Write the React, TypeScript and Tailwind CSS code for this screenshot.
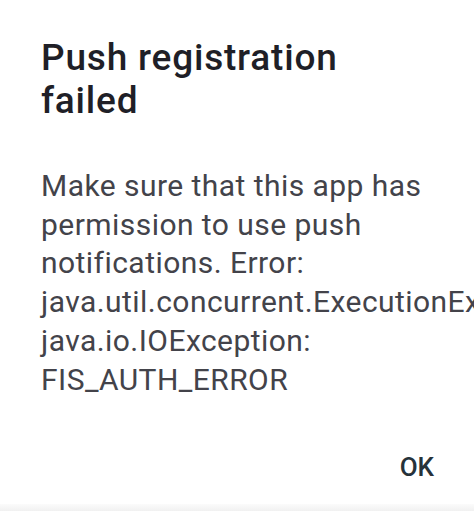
export default function App() {
  return (
    <div className="w-[474px] h-[511px] bg-white overflow-hidden flex flex-col" style={{ fontFamily: "Roboto, 'Liberation Sans', sans-serif" }}>
      <div className="pl-[41px] pt-[36px]">
        <h1 className="text-[37px] leading-[43px] font-medium tracking-[0.8px] text-[#1f1f27] w-[340px]">Push registration failed</h1>
      </div>
      <div className="pl-[41px] pt-[45px] whitespace-nowrap">
        <p className="text-[30px] leading-[38.7px] tracking-[0.45px] text-[#43434a]">
          Make sure that this app has<br />
          permission to use push<br />
          notifications. Error:<br />
          java.util.concurrent.ExecutionException:<br />
          java.io.IOException:<br />
          FIS_AUTH_ERROR
        </p>
      </div>
      <div className="flex justify-end pr-[40px] pt-[53px]">
        <span className="text-[26px] leading-[30px] font-medium text-[#26323a]">OK</span>
      </div>
      <div className="mt-auto h-[7px] bg-gradient-to-b from-[#fbfbfb] to-[#f1f1f1]" />
    </div>
  );
}
